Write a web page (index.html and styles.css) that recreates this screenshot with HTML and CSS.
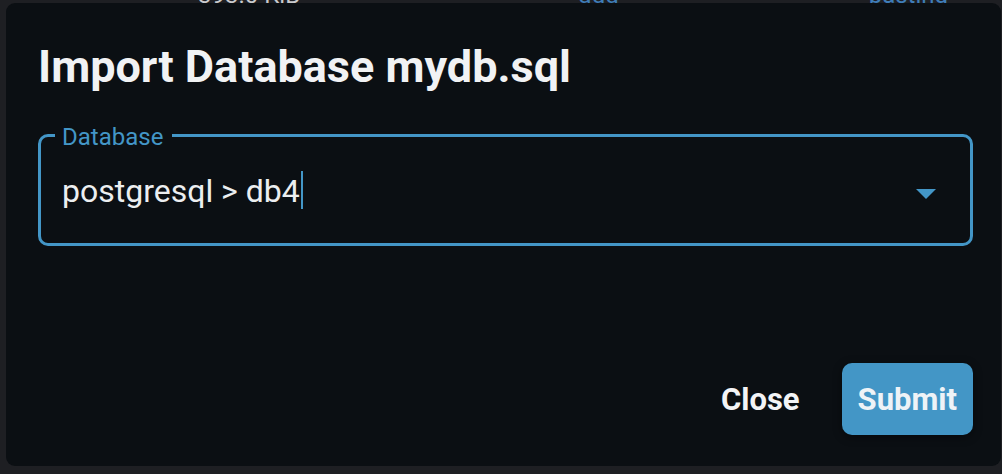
FILE: index.html
```html
<!DOCTYPE html>
<html lang="en">
<head>
<meta charset="utf-8">
<title>Import Database</title>
<link rel="stylesheet" href="styles.css">
</head>
<body>
  <div class="behind">
    <span class="b-size">393.0 KiB</span>
    <span class="b-link b-ddd">ddd</span>
    <span class="b-link b-past">pasting</span>
  </div>
  <div class="dialog" role="dialog">
    <h2 class="title">Import Database mydb.sql</h2>
    <fieldset class="field">
      <legend class="label">Database</legend>
      <div class="control">
        <span class="value">postgresql &gt; db4</span><span class="caret"></span>
        <svg class="arrow" viewBox="0 0 24 24" width="48" height="48" aria-hidden="true"><path d="M7 10l5 5 5-5z"/></svg>
      </div>
    </fieldset>
    <div class="actions">
      <button class="btn btn-text">Close</button>
      <button class="btn btn-primary">Submit</button>
    </div>
  </div>
</body>
</html>
```
FILE: styles.css
```css
html, body {
  margin: 0;
  padding: 0;
}
body {
  width: 1002px;
  height: 474px;
  overflow: hidden;
  background: #1e1f23;
  font-family: Roboto, "Liberation Sans", Arial, sans-serif;
}
.behind {
  height: 3px;
  overflow: hidden;
  display: flex;
  align-items: flex-end;
}
.behind span {
  font-size: 24px;
  line-height: 1;
  margin-bottom: -4px;
}
.b-size {
  color: #c9cacc;
  margin-left: 198px;
}
.b-link {
  color: #3f7db8;
}
.b-ddd {
  margin-left: 278px;
}
.b-past {
  margin-left: 250px;
}
.dialog {
  box-sizing: border-box;
  width: 995px;
  height: 463px;
  margin-left: 6px;
  background: #0b0f13;
  border-radius: 9px;
  padding: 29px 28px 31px 32px;
  display: flex;
  flex-direction: column;
  color: #eff0f2;
}
.title {
  margin: 0;
  font-size: 45px;
  line-height: 70px;
  font-weight: 700;
  color: #f1f2f4;
}
.field {
  margin: 17px 0 0;
  padding: 0;
  border: 3px solid #4396c7;
  border-radius: 10px;
  min-width: 0;
}
.label {
  margin-left: 14px;
  padding: 4px 9px 0 7px;
  font-size: 24px;
  line-height: 28px;
  color: #4396c7;
}
.control {
  height: 106px;
  margin-top: -14px;
  display: flex;
  align-items: center;
  padding: 0 20px 0 21px;
}
.value {
  font-size: 32px;
  line-height: 38px;
  color: #eceef0;
  padding-top: 2px;
}
.caret {
  width: 2px;
  height: 38px;
  margin-left: 1px;
  background: #4396c7;
}
.arrow {
  margin-left: auto;
  margin-top: 6px;
  fill: #4396c7;
}
.actions {
  margin-top: auto;
  display: flex;
  justify-content: flex-end;
  align-items: center;
  gap: 26px;
}
.btn {
  font-family: inherit;
  font-size: 31px;
  font-weight: 700;
  height: 72px;
  border: none;
  border-radius: 10px;
  padding: 0 16px;
  cursor: pointer;
}
.btn-text {
  background: transparent;
  color: #f3f4f6;
}
.btn-primary {
  background: #4396c6;
  color: #eef3f7;
  box-shadow: 0 2px 10px rgba(0, 0, 0, 0.45);
}
```
